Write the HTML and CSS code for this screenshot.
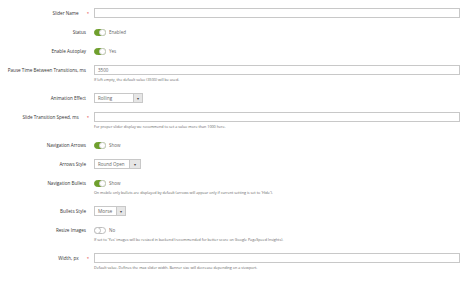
FILE: index.html
```html
<!DOCTYPE html>
<html>
<head>
<meta charset="utf-8">
<link rel="stylesheet" href="styles.css">
</head>
<body>
<div class="form">
  <div class="field">
    <label class="label req">Slider Name<span class="star">*</span></label>
    <div class="control"><div class="input"></div></div>
  </div>
  <div class="field">
    <label class="label">Status</label>
    <div class="control"><span class="switch on"></span><span class="val">Enabled</span></div>
  </div>
  <div class="field">
    <label class="label">Enable Autoplay</label>
    <div class="control"><span class="switch on"></span><span class="val">Yes</span></div>
  </div>
  <div class="field">
    <label class="label">Pause Time Between Transitions, ms</label>
    <div class="control col"><div class="input"><span class="val">3500</span></div>
      <div class="note">If left empty, the default value (3500) will be used.</div></div>
  </div>
  <div class="field">
    <label class="label">Animation Effect</label>
    <div class="control"><div class="select w-rolling"><span class="val">Rolling</span><span class="arrow">&#9662;</span></div></div>
  </div>
  <div class="field">
    <label class="label req">Slide Transition Speed, ms<span class="star">*</span></label>
    <div class="control col"><div class="input"></div>
      <div class="note">For proper slider display we recommend to set a value more than 1000 here.</div></div>
  </div>
  <div class="field">
    <label class="label">Navigation Arrows</label>
    <div class="control"><span class="switch on"></span><span class="val">Show</span></div>
  </div>
  <div class="field">
    <label class="label">Arrows Style</label>
    <div class="control"><div class="select w-round"><span class="val">Round Open</span><span class="arrow">&#9662;</span></div></div>
  </div>
  <div class="field">
    <label class="label">Navigation Bullets</label>
    <div class="control col"><div class="row"><span class="switch on"></span><span class="val">Show</span></div>
      <div class="note">On mobile only bullets are displayed by default (arrows will appear only if current setting is set to 'Hide').</div></div>
  </div>
  <div class="field">
    <label class="label">Bullets Style</label>
    <div class="control"><div class="select w-morse"><span class="val big">Morse</span><span class="arrow">&#9662;</span></div></div>
  </div>
  <div class="field">
    <label class="label">Resize Images</label>
    <div class="control col"><div class="row"><span class="switch"></span><span class="val">No</span></div>
      <div class="note">If set to 'Yes' images will be resized in backend (recommended for better score on Google PageSpeed Insights).</div></div>
  </div>
  <div class="field">
    <label class="label req">Width, px<span class="star">*</span></label>
    <div class="control col"><div class="input"></div>
      <div class="note">Default value. Defines the max slider width. Banner size will decrease depending on a viewport.</div></div>
  </div>
</div>
</body>
</html>
```
FILE: styles.css
```css
* { box-sizing: border-box; }
body {
  margin: 0;
  background: #fff;
  font-family: "Open Sans", "Liberation Sans", sans-serif;
  color: #303030;
}
.form {
  padding-top: 8px;
  display: flex;
  flex-direction: column;
  gap: 9px;
}
.field {
  display: grid;
  grid-template-columns: 89px 366px;
  column-gap: 5px;
  align-items: start;
}
.label {
  height: 10px;
  display: flex;
  align-items: center;
  justify-content: flex-end;
  font-size: 4.6px;
  font-weight: 400;
  color: #333;
  padding-right: 3px;
  white-space: nowrap;
}
.label.req { padding-right: 0; }
.star {
  margin-left: 8px;
  color: #e22626;
  font-weight: 400;
  font-size: 4.3px;
}
.control {
  display: flex;
  align-items: center;
  height: 10px;
}
.control.col {
  flex-direction: column;
  align-items: stretch;
  height: auto;
}
.row {
  display: flex;
  align-items: center;
  height: 10px;
}
.input {
  height: 10px;
  width: 366px;
  border: 1px solid #c8c8c8;
  background: #fff;
  display: flex;
  align-items: center;
  padding-left: 3px;
}
.val {
  font-size: 4.5px;
  color: #666;
  white-space: nowrap;
}
.val.big { font-size: 4.8px; }
.switch {
  width: 12px;
  height: 7px;
  border-radius: 4px;
  border: 1px solid #bdbdbd;
  background: #fff;
  position: relative;
  margin-right: 3px;
  flex: none;
}
.switch::after {
  content: "";
  position: absolute;
  top: -1px;
  left: -1px;
  width: 7px;
  height: 7px;
  border-radius: 50%;
  background: #fff;
  border: 1px solid #bdbdbd;
  box-sizing: border-box;
}
.switch.on {
  background: #6f9f2d;
  border-color: #6f9f2d;
}
.switch.on::after {
  left: auto;
  right: -1px;
  border-color: #d0d0d0;
}
.select {
  height: 10px;
  border: 1px solid #c8c8c8;
  display: flex;
  align-items: center;
  background: #fff;
  position: relative;
  padding-left: 3px;
}
.select .arrow {
  margin-left: auto;
  height: 100%;
  width: 9px;
  background: #e6e6e6;
  border-left: 1px solid #c8c8c8;
  display: flex;
  align-items: center;
  justify-content: center;
  font-size: 4px;
  color: #444;
}
.w-rolling { width: 49px; }
.w-round { width: 47px; }
.w-round .arrow { width: 11px; }
.w-morse { width: 32px; }
.note {
  margin-top: 1px;
  height: 8px;
  line-height: 8px;
  font-size: 3.7px;
  color: #666;
  white-space: nowrap;
}
```
